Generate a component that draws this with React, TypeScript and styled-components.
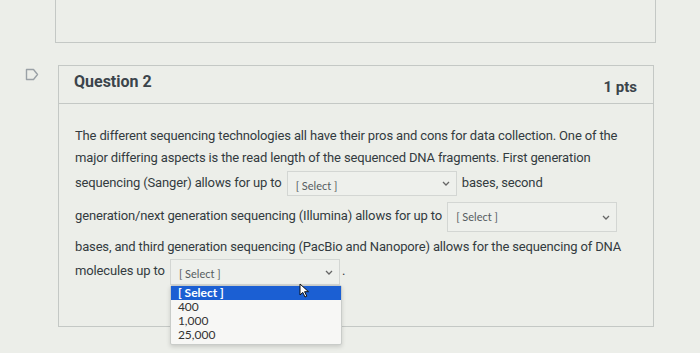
import React from 'react';
import styled, { createGlobalStyle } from 'styled-components';

const GlobalStyle = createGlobalStyle`
  html, body {
    margin: 0;
    padding: 0;
    background: #eceee9;
  }
  body {
    font-family: Roboto, 'Liberation Sans', sans-serif;
    color: #2d3b45;
  }
`;

const OPTIONS = ['400', '1,000', '25,000'];

const App: React.FC = () => (
  <>
    <GlobalStyle />
    <Page>
      <PrevCard />
      <QuestionRow>
        <FlagCol>
          <Flag />
        </FlagCol>
        <Card>
          <CardHeader>
            <Title>Question 2</Title>
            <Points>1 pts</Points>
          </CardHeader>
          <CardBody>
            <Text>
              The different sequencing technologies all have their pros and cons for data collection. One of the
              <br />
              major differing aspects is the read length of the sequenced DNA fragments. First generation
              <br />
              sequencing (Sanger) allows for up to <Select h={25} gap={2} /> bases, second
              <br />
              generation/next generation sequencing (Illumina) allows for up to <Select h={30} gap={4} />
              <br />
              bases, and third generation sequencing (PacBio and Nanopore) allows for the sequencing of DNA
              <br />
              molecules up to{' '}
              <OpenWrap>
                <Select h={26} gap={1} />
                <Menu>
                  <MenuItem active>[ Select ]</MenuItem>
                  {OPTIONS.map(o => (
                    <MenuItem key={o} active={false}>
                      {o}
                    </MenuItem>
                  ))}
                  <Cursor />
                </Menu>
              </OpenWrap>
              .
            </Text>
          </CardBody>
        </Card>
      </QuestionRow>
    </Page>
  </>
);

const Select: React.FC<{ h: number; gap: number }> = ({ h, gap }) => (
  <SelectBox h={h} gap={gap}>
    <SelectLabel>[ Select ]</SelectLabel>
    <Chevron viewBox="0 0 8 5">
      <path d="M1 1 L4 4 L7 1" fill="none" stroke="#666" strokeWidth="1.3" />
    </Chevron>
  </SelectBox>
);

const Flag = () => (
  <svg width="14" height="13" viewBox="0 0 14 13">
    <path
      d="M1.5 1.5 H8.5 L12.5 6.5 L8.5 11.5 H1.5 Z"
      fill="none"
      stroke="#9aa1a6"
      strokeWidth="1.4"
      strokeLinejoin="round"
    />
  </svg>
);

const Cursor = () => (
  <CursorSvg width="11" height="15" viewBox="0 0 11 15">
    <path d="M1 1 L1 12 L3.8 9.4 L6 14 L7.8 13.2 L5.6 8.7 L9.5 8.7 Z" fill="#fff" stroke="#111" strokeWidth="1" />
  </CursorSvg>
);

const Page = styled.div`
  width: 700px;
  height: 353px;
  overflow: hidden;
`;

const PrevCard = styled.div`
  margin-left: 55px;
  width: 599px;
  height: 42px;
  border: 1px solid #c4c8c5;
  border-top: none;
`;

const QuestionRow = styled.div`
  display: flex;
  margin-top: 22px;
`;

const FlagCol = styled.div`
  width: 58px;
  padding: 1px 0 0 25px;
  box-sizing: border-box;
`;

const Card = styled.div`
  width: 594px;
  border: 1px solid #c4c8c5;
`;

const CardHeader = styled.div`
  display: flex;
  align-items: center;
  justify-content: space-between;
  height: 37px;
  padding: 0 16px 0 15px;
  border-bottom: 1px solid #c4c8c5;
`;

const Title = styled.div`
  font-size: 16px;
  font-weight: 700;
  color: #3b444b;
  margin-bottom: 6px;
`;

const Points = styled.div`
  font-size: 15px;
  font-weight: 700;
  color: #3b444b;
  margin-top: 4px;
`;

const CardBody = styled.div`
  padding: 21px 16px 40px 16px;
`;

const Text = styled.p`
  margin: 0;
  font-size: 13px;
  letter-spacing: -0.15px;
  line-height: 22px;
  white-space: nowrap;
  color: #333b40;
`;

const OpenWrap = styled.span`
  position: relative;
  display: inline-block;
  vertical-align: middle;
`;

const SelectBox = styled.span<{ h: number; gap: number }>`
  display: inline-flex;
  align-items: center;
  justify-content: space-between;
  box-sizing: border-box;
  width: 170px;
  height: ${p => p.h}px;
  margin: ${p => p.gap}px 2px;
  padding: 0 6px 0 8px;
  vertical-align: middle;
  border: 1px solid #d3d6d3;
  background: #eef0ec;
`;

const SelectLabel = styled.span`
  font-family: Lato, 'Liberation Sans', sans-serif;
  font-size: 11px;
  letter-spacing: 0;
  color: #555c60;
  align-self: flex-start;
  margin-top: 3px;
`;

const Chevron = styled.svg`
  width: 8px;
  height: 5px;
`;

const Menu = styled.div`
  position: absolute;
  left: 2px;
  top: 27px;
  width: 170px;
  padding-bottom: 2px;
  background: #f7f7f5;
  border: 1px solid #c9ccc9;
  border-radius: 2px;
  box-shadow: 0 2px 4px rgba(0, 0, 0, 0.15);
  z-index: 2;
`;

const MenuItem = styled.div<{ active: boolean }>`
  font-family: Lato, 'Liberation Sans', sans-serif;
  font-size: 12px;
  letter-spacing: 0;
  line-height: 14px;
  padding: 0 7px;
  color: ${p => (p.active ? '#fff' : '#333')};
  background: ${p => (p.active ? '#1b5fd3' : 'transparent')};
  font-weight: ${p => (p.active ? 700 : 400)};
`;

const CursorSvg = styled.svg`
  position: absolute;
  left: 128px;
  top: -3px;
`;

export default App;
